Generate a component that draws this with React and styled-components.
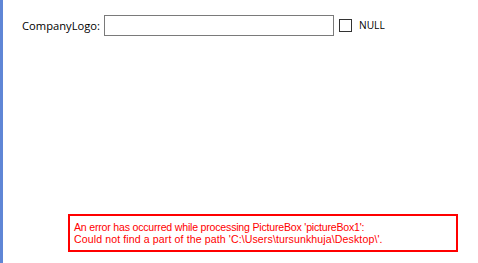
import React from "react";
import styled, {createGlobalStyle} from "styled-components";

const Global = createGlobalStyle`
  html, body {
    margin: 0;
    padding: 0;
    background: #ffffff;
  }
`

const Window = styled.div`
  width: 478px;
  height: 263px;
  box-sizing: border-box;
  border-left: 3px solid #5f86d6;
  background: #ffffff;
  display: flex;
  flex-direction: column;
  font-family: "Open Sans", "Liberation Sans", sans-serif;
`

const FieldRow = styled.div`
  display: flex;
  align-items: center;
  height: 22px;
  margin-top: 14px;
  padding-left: 19px;
`

const Label = styled.label`
  font-size: 11.2px;
  color: #000000;
  margin-right: 4px;
`

const TextBox = styled.div`
  width: 230px;
  height: 21px;
  box-sizing: border-box;
  border: 1px solid #7a7a7a;
  background: #ffffff;
`

const Check = styled.span`
  width: 13px;
  height: 13px;
  box-sizing: border-box;
  border: 1px solid #333333;
  background: #ffffff;
  margin-left: 5px;
`

const CheckText = styled.span`
  font-size: 10.2px;
  color: #000000;
  margin-left: 7px;
`

const Spacer = styled.div`
  flex: 1;
`

const ErrorBox = styled.div`
  width: 390px;
  height: 38px;
  box-sizing: border-box;
  border: 2px solid #ff0000;
  margin: 0 0 11px 65px;
  padding: 5px 0 0 4px;
  font-family: "Liberation Sans", Arial, sans-serif;
  font-size: 10.6px;
  line-height: 12px;
  color: #ff0000;
  white-space: nowrap;
`

const ErrorLine = styled.div`
  letter-spacing: ${p => p.$spacing || "0"};
`

export default function App() {
    return <>
        <Global/>
        <Window>
            <FieldRow>
                <Label>CompanyLogo:</Label>
                <TextBox/>
                <Check/>
                <CheckText>NULL</CheckText>
            </FieldRow>
            <Spacer/>
            <ErrorBox>
                <ErrorLine $spacing="-0.21px">An error has occurred while processing PictureBox 'pictureBox1':</ErrorLine>
                <ErrorLine $spacing="0.1px">Could not find a part of the path 'C:\Users\tursunkhuja\Desktop\'.</ErrorLine>
            </ErrorBox>
        </Window>
    </>
}
